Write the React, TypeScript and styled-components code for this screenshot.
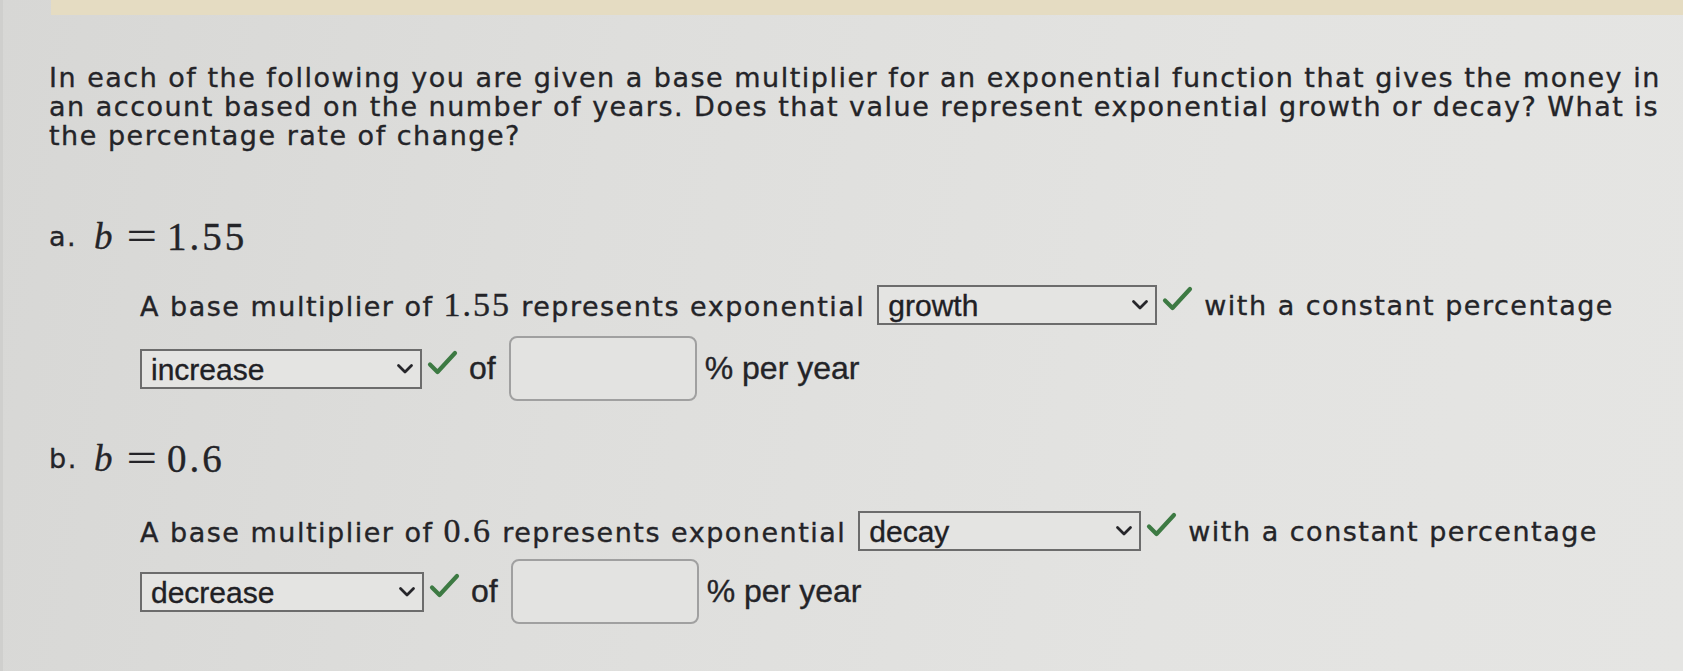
import React from "react";
import styled, { createGlobalStyle } from "styled-components";

const Global = createGlobalStyle`
  html, body {
    margin: 0;
    padding: 0;
  }
  body {
    background: linear-gradient(100deg, #d7d7d5 0%, #dededc 35%, #e3e3e1 70%, #e5e5e3 100%);
    min-height: 671px;
    overflow: hidden;
  }
`;

const Page = styled.div`
  position: relative;
  width: 1683px;
  height: 671px;
  box-sizing: border-box;
  padding-left: 46px;
  color: #242428;
  font-family: "DejaVu Sans", Verdana, sans-serif;
  font-size: 27px;
  letter-spacing: 1.5px;
  -webkit-text-stroke: 0.35px #242428;
  border-left: 3px solid #cfcfcd;
`;

const Band = styled.div`
  height: 15px;
  background: #e5dcc2;
  margin-left: 2px;
`;

const Prompt = styled.p`
  margin: 48px 0 0 0;
  line-height: 29px;
  white-space: nowrap;
`;

const Part = styled.section<{ $top: number }>`
  margin-top: ${(p) => p.$top}px;
  display: flex;
  flex-direction: column;
`;

const Label = styled.div`
  height: 40px;
  display: flex;
  align-items: center;
  white-space: nowrap;
`;

const Letter = styled.span`
  width: 45px;
`;

const Body = styled.div<{ $gap: number; $rowGap: number }>`
  padding-left: 91px;
  margin-top: ${(p) => p.$gap}px;
  display: flex;
  flex-direction: column;
  gap: ${(p) => p.$rowGap}px;
`;

const Row = styled.div<{ $h: number }>`
  height: ${(p) => p.$h}px;
  display: flex;
  align-items: center;
  white-space: nowrap;
`;

const MathVar = styled.span`
  font-family: "Liberation Serif", "Times New Roman", serif;
  font-style: italic;
  font-size: 37px;
  letter-spacing: 0;
`;

const MathOp = styled.span`
  font-family: "Liberation Serif", "Times New Roman", serif;
  font-size: 38px;
  letter-spacing: 0;
  margin: 0 15px 0 18px;
  transform: scaleX(1.4);
  display: inline-block;
`;

const MathNum = styled.span<{ $size?: number; $ls?: number }>`
  font-family: "Liberation Serif", "Times New Roman", serif;
  font-size: ${(p) => p.$size ?? 39}px;
  letter-spacing: ${(p) => p.$ls ?? 3}px;
`;

const SelectGroup = styled.div<{ $ml?: number }>`
  display: flex;
  align-items: flex-start;
  margin-left: ${(p) => p.$ml ?? 0}px;
`;

const Select = styled.div<{ $w: number }>`
  width: ${(p) => p.$w}px;
  height: 40px;
  box-sizing: border-box;
  border: 2px solid #6c6c6c;
  background: #e4e4e2;
  display: flex;
  align-items: center;
  justify-content: space-between;
  padding: 0 6px 0 9px;
  font-family: "Liberation Sans", Arial, sans-serif;
  font-size: 30px;
  letter-spacing: 0;
  color: #202024;
`;

const SelectText = styled.span`
  line-height: 1;
  margin-top: 2px;
`;

const Check = styled.svg`
  width: 31px;
  height: 25px;
  margin: 1px 11px 0 5px;
  flex: none;
`;

const Aside = styled.span`
  font-family: "Liberation Sans", Arial, sans-serif;
  font-size: 32px;
  letter-spacing: 0;
`;

const Blank = styled.div`
  width: 188px;
  height: 65px;
  box-sizing: border-box;
  margin: 0 8px 0 13px;
  border: 2px solid #a0a0a0;
  border-radius: 8px;
  background: #e3e3e1;
`;

const Chevron = () => (
  <svg width="18" height="12" viewBox="0 0 18 12">
    <path d="M2.5 2.5 L9 9 L15.5 2.5" fill="none" stroke="#26262a" strokeWidth="2.8" strokeLinecap="round" strokeLinejoin="round" />
  </svg>
);

const Tick = () => (
  <Check viewBox="0 0 31 25">
    <path d="M3 14.5 L10.5 22 L28 3" fill="none" stroke="#3d7a43" strokeWidth="4.2" strokeLinecap="round" strokeLinejoin="round" />
  </Check>
);

type Item = {
  letter: string;
  value: string;
  kind: string;
  rate: string;
  w1: number;
  w2: number;
  top: number;
  gap: number;
  rowGap: number;
};

const items: Item[] = [
  { letter: "a.", value: "1.55", kind: "growth", rate: "increase", w1: 280, w2: 282, top: 66, gap: 29, rowGap: 11 },
  { letter: "b.", value: "0.6", kind: "decay", rate: "decrease", w1: 283, w2: 284, top: 37, gap: 33, rowGap: 8 },
];

export default function App() {
  return (
    <>
      <Global />
      <Page>
        <Band />
        <Prompt>
          In each of the following you are given a base multiplier for an exponential function that gives the money in
          <br />
          an account based on the number of years. Does that value represent exponential growth or decay? What is
          <br />
          the percentage rate of change?
        </Prompt>
        {items.map((it) => (
          <Part key={it.letter} $top={it.top}>
            <Label>
              <Letter>{it.letter}</Letter>
              <MathVar>b</MathVar>
              <MathOp>=</MathOp>
              <MathNum>{it.value}</MathNum>
            </Label>
            <Body $gap={it.gap} $rowGap={it.rowGap}>
              <Row $h={40}>
                <span>
                  A base multiplier of <MathNum $size={34} $ls={2}>{it.value}</MathNum> represents exponential
                </span>
                <SelectGroup $ml={12}>
                  <Select $w={it.w1}>
                    <SelectText>{it.kind}</SelectText>
                    <Chevron />
                  </Select>
                  <Tick />
                </SelectGroup>
                <span>with a constant percentage</span>
              </Row>
              <Row $h={65}>
                <SelectGroup>
                  <Select $w={it.w2}>
                    <SelectText>{it.rate}</SelectText>
                    <Chevron />
                  </Select>
                  <Tick />
                </SelectGroup>
                <Aside>of</Aside>
                <Blank />
                <Aside>% per year</Aside>
              </Row>
            </Body>
          </Part>
        ))}
      </Page>
    </>
  );
}
